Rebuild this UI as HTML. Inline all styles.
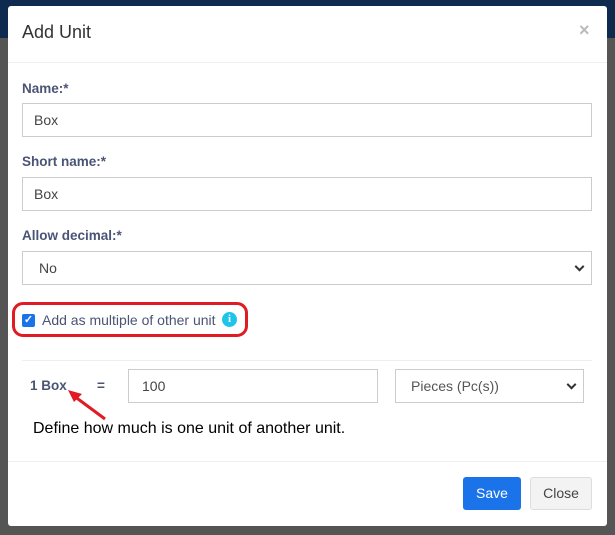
<!DOCTYPE html>
<html><head><style>
*{box-sizing:border-box;margin:0;padding:0}
body{width:615px;height:535px;background:#555;position:relative;overflow:hidden;font-family:"Liberation Sans",sans-serif}
.top{position:absolute;left:0;top:0;width:615px;height:38px;background:#0f2a4f}
.modal{position:absolute;left:8px;top:6px;width:599px;height:520px;background:#fff;border-radius:3px}
.abs{position:absolute}
.lbl{position:absolute;left:14px;font-size:13.5px;font-weight:bold;color:#4a5475}
.inp{position:absolute;border:1px solid #ccc;background:#fff;font-size:14px;color:#444;padding-left:11px;display:flex;align-items:center}
.chev{position:absolute;right:8px;top:50%;width:7px;height:7px;border-right:2px solid #333;border-bottom:2px solid #333;transform:translateY(-70%) rotate(45deg)}
</style></head><body>
<div class="top"></div>
<div class="modal">
 <div class="abs" style="left:14px;top:16px;font-size:18px;color:#333">Add Unit</div>
 <div class="abs" style="left:571px;top:14px;font-size:18px;color:#bbb;font-weight:bold">×</div>
 <div class="abs" style="left:0;top:56px;width:599px;height:1px;background:#eee"></div>
 <div class="lbl" style="top:75px">Name:*</div>
 <div class="inp" style="left:14px;top:97px;width:570px;height:34px">Box</div>
 <div class="lbl" style="top:148px">Short name:*</div>
 <div class="inp" style="left:14px;top:171px;width:570px;height:34px">Box</div>
 <div class="lbl" style="top:222px">Allow decimal:*</div>
 <div class="inp" style="left:14px;top:245px;width:570px;height:34px;padding-left:16px">No<span class="chev"></span></div>
 <div class="abs" style="left:4px;top:296px;width:236px;height:35px;border:3px solid #e01b24;border-radius:11px"></div>
 <div class="abs" style="left:14px;top:308px;width:13px;height:13px;background:#1a73e8;border-radius:2px;color:#fff;font-size:11px;line-height:13px;text-align:center;font-weight:bold">✓</div>
 <div class="abs" style="left:34px;top:306px;font-size:14px;color:#4a5475">Add as multiple of other unit</div>
 <div class="abs" style="left:214px;top:306px;width:15px;height:15px;border-radius:50%;background:#1fc4ea;color:#fff;font-size:11px;font-weight:bold;text-align:center;line-height:15px;font-family:'Liberation Serif',serif">i</div>
 <div class="abs" style="left:14px;top:354px;width:570px;height:1px;background:#eee"></div>
 <div class="abs" style="left:22px;top:372px;font-size:13.5px;font-weight:bold;color:#4a5475">1 Box</div>
 <div class="abs" style="left:89px;top:372px;font-size:13.5px;font-weight:bold;color:#4a5475">=</div>
 <div class="inp" style="left:120px;top:363px;width:250px;height:34px;padding-left:13px">100</div>
 <div class="inp" style="left:387px;top:363px;width:189px;height:34px;padding-left:15px;color:#555">Pieces (Pc(s))<span class="chev"></span></div>
 <div class="abs" style="left:25px;top:414px;font-size:16px;color:#000">Define how much is one unit of another unit.</div>
 <div class="abs" style="left:0;top:455px;width:599px;height:1px;background:#eee"></div>
 <div class="abs" style="left:455px;top:471px;width:58px;height:33px;background:#1a73e8;border-radius:3px;color:#fff;font-size:14px;text-align:center;line-height:33px">Save</div>
 <div class="abs" style="left:522px;top:471px;width:62px;height:33px;background:#f3f3f3;border:1px solid #ddd;border-radius:3px;color:#444;font-size:14px;text-align:center;line-height:31px">Close</div>
</div>
<svg class="abs" style="left:0;top:0" width="615" height="535"><line x1="105" y1="419" x2="74" y2="396" stroke="#e01b24" stroke-width="3"/><polygon points="68,390 82,394 74,402" fill="#e01b24"/></svg>
</body></html>
